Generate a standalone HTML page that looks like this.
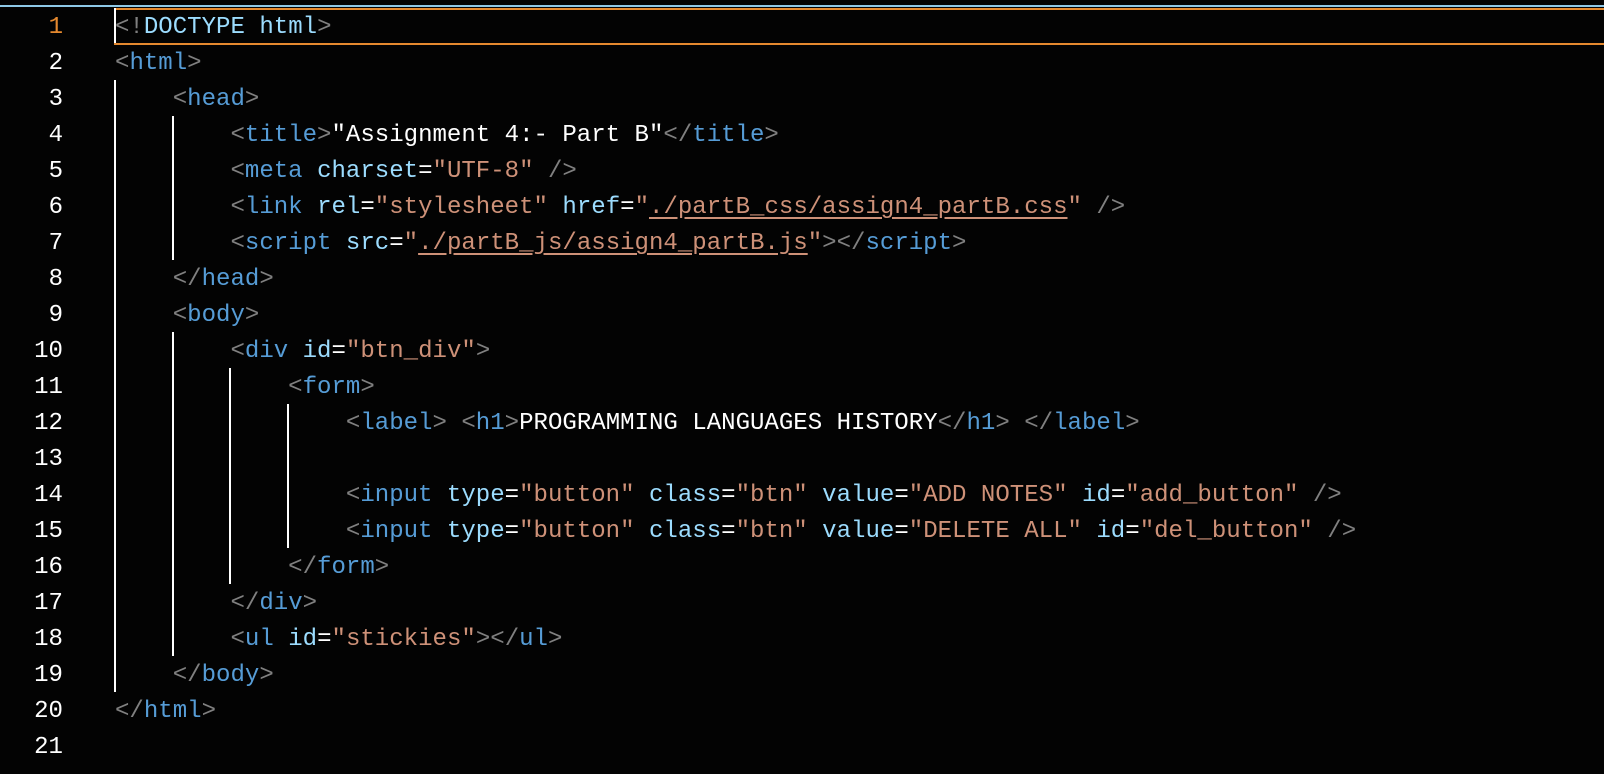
<!DOCTYPE html>
<html><head><style>
body{margin:0;width:1604px;height:774px;background:#030303;overflow:hidden;position:relative;font-family:"Liberation Mono","DejaVu Sans Mono",monospace;font-size:24.05px;}
.ln{position:absolute;left:0;width:63px;text-align:right;color:#fff;height:36px;line-height:36px}
.c{position:absolute;left:115px;white-space:pre;height:36px;line-height:36px;color:#fff}
.g{position:absolute;width:2px;background:#fff}
.p{color:#808080}.t{color:#569cd6}.a{color:#9cdcfe}.s{color:#ce9178}.u{text-decoration:underline;text-underline-offset:4px}
</style></head><body>
<div style="position:absolute;left:0;top:5px;width:1604px;height:2px;background:#8ec8e6"></div>
<div style="position:absolute;left:114px;top:8px;width:1490px;height:33px;border-top:2px solid #e5892f;border-bottom:2px solid #e5892f"></div>
<div style="position:absolute;left:114px;top:8px;width:2px;height:35px;background:#fff"></div>
<div class="g" style="left:114px;top:80px;height:612px"></div>
<div class="g" style="left:171.7px;top:116px;height:144px"></div>
<div class="g" style="left:171.7px;top:332px;height:324px"></div>
<div class="g" style="left:229.4px;top:368px;height:216px"></div>
<div class="g" style="left:287px;top:404px;height:144px"></div>
<div class="ln" style="top:10px;color:#e5892f">1</div>
<div class="ln" style="top:46px">2</div>
<div class="ln" style="top:82px">3</div>
<div class="ln" style="top:118px">4</div>
<div class="ln" style="top:154px">5</div>
<div class="ln" style="top:190px">6</div>
<div class="ln" style="top:226px">7</div>
<div class="ln" style="top:262px">8</div>
<div class="ln" style="top:298px">9</div>
<div class="ln" style="top:334px">10</div>
<div class="ln" style="top:370px">11</div>
<div class="ln" style="top:406px">12</div>
<div class="ln" style="top:442px">13</div>
<div class="ln" style="top:478px">14</div>
<div class="ln" style="top:514px">15</div>
<div class="ln" style="top:550px">16</div>
<div class="ln" style="top:586px">17</div>
<div class="ln" style="top:622px">18</div>
<div class="ln" style="top:658px">19</div>
<div class="ln" style="top:694px">20</div>
<div class="ln" style="top:730px">21</div>
<div class="c" style="top:10px"><span class="p">&lt;!</span><span class="a">DOCTYPE</span> <span class="a">html</span><span class="p">&gt;</span></div>
<div class="c" style="top:46px"><span class="p">&lt;</span><span class="t">html</span><span class="p">&gt;</span></div>
<div class="c" style="top:82px">    <span class="p">&lt;</span><span class="t">head</span><span class="p">&gt;</span></div>
<div class="c" style="top:118px">        <span class="p">&lt;</span><span class="t">title</span><span class="p">&gt;</span>"Assignment 4:- Part B"<span class="p">&lt;/</span><span class="t">title</span><span class="p">&gt;</span></div>
<div class="c" style="top:154px">        <span class="p">&lt;</span><span class="t">meta</span> <span class="a">charset</span>=<span class="s">"UTF-8"</span> <span class="p">/&gt;</span></div>
<div class="c" style="top:190px">        <span class="p">&lt;</span><span class="t">link</span> <span class="a">rel</span>=<span class="s">"stylesheet"</span> <span class="a">href</span>=<span class="s">"<span class="u">./partB_css/assign4_partB.css</span>"</span> <span class="p">/&gt;</span></div>
<div class="c" style="top:226px">        <span class="p">&lt;</span><span class="t">script</span> <span class="a">src</span>=<span class="s">"<span class="u">./partB_js/assign4_partB.js</span>"</span><span class="p">&gt;&lt;/</span><span class="t">script</span><span class="p">&gt;</span></div>
<div class="c" style="top:262px">    <span class="p">&lt;/</span><span class="t">head</span><span class="p">&gt;</span></div>
<div class="c" style="top:298px">    <span class="p">&lt;</span><span class="t">body</span><span class="p">&gt;</span></div>
<div class="c" style="top:334px">        <span class="p">&lt;</span><span class="t">div</span> <span class="a">id</span>=<span class="s">"btn_div"</span><span class="p">&gt;</span></div>
<div class="c" style="top:370px">            <span class="p">&lt;</span><span class="t">form</span><span class="p">&gt;</span></div>
<div class="c" style="top:406px">                <span class="p">&lt;</span><span class="t">label</span><span class="p">&gt;</span> <span class="p">&lt;</span><span class="t">h1</span><span class="p">&gt;</span>PROGRAMMING LANGUAGES HISTORY<span class="p">&lt;/</span><span class="t">h1</span><span class="p">&gt;</span> <span class="p">&lt;/</span><span class="t">label</span><span class="p">&gt;</span></div>
<div class="c" style="top:478px">                <span class="p">&lt;</span><span class="t">input</span> <span class="a">type</span>=<span class="s">"button"</span> <span class="a">class</span>=<span class="s">"btn"</span> <span class="a">value</span>=<span class="s">"ADD NOTES"</span> <span class="a">id</span>=<span class="s">"add_button"</span> <span class="p">/&gt;</span></div>
<div class="c" style="top:514px">                <span class="p">&lt;</span><span class="t">input</span> <span class="a">type</span>=<span class="s">"button"</span> <span class="a">class</span>=<span class="s">"btn"</span> <span class="a">value</span>=<span class="s">"DELETE ALL"</span> <span class="a">id</span>=<span class="s">"del_button"</span> <span class="p">/&gt;</span></div>
<div class="c" style="top:550px">            <span class="p">&lt;/</span><span class="t">form</span><span class="p">&gt;</span></div>
<div class="c" style="top:586px">        <span class="p">&lt;/</span><span class="t">div</span><span class="p">&gt;</span></div>
<div class="c" style="top:622px">        <span class="p">&lt;</span><span class="t">ul</span> <span class="a">id</span>=<span class="s">"stickies"</span><span class="p">&gt;&lt;/</span><span class="t">ul</span><span class="p">&gt;</span></div>
<div class="c" style="top:658px">    <span class="p">&lt;/</span><span class="t">body</span><span class="p">&gt;</span></div>
<div class="c" style="top:694px"><span class="p">&lt;/</span><span class="t">html</span><span class="p">&gt;</span></div>
</body></html>
